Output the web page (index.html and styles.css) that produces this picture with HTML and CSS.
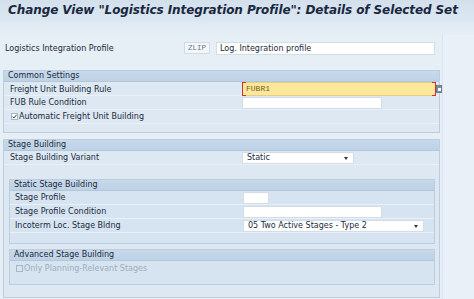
FILE: index.html
```html
<!DOCTYPE html>
<html>
<head>
<meta charset="utf-8">
<link rel="stylesheet" href="styles.css">
</head>
<body>
<div class="title">Change View "Logistics Integration Profile": Details of Selected Set</div>
<div class="toolbar"></div>
<div class="content">
  <div class="toprow">
    <span class="label">Logistics Integration Profile</span>
    <span class="key">ZLIP</span>
    <span class="field desc">Log. Integration profile</span>
  </div>

  <div class="group g1">
    <div class="ghead">Common Settings</div>
    <div class="row">
      <span class="label">Freight Unit Building Rule</span>
      <span class="fubr"><span class="field req">FUBR1</span><span class="help"></span></span>
    </div>
    <div class="row">
      <span class="label">FUB Rule Condition</span>
      <span class="field w140"></span>
    </div>
    <div class="row">
      <span class="chk"><svg width="7" height="7" viewBox="0 0 7 7"><rect x="0.5" y="0.5" width="6" height="6" fill="#fff" stroke="#a6b4c4"/><path d="M1.5 3.6 L2.9 5 L5.6 1.8" fill="none" stroke="#2a3a4e" stroke-width="1"/></svg>Automatic Freight Unit Building</span>
    </div>
  </div>

  <div class="group g2">
    <div class="ghead">Stage Building</div>
    <div class="row">
      <span class="label">Stage Building Variant</span>
      <span class="field dd w112">Static<i class="arr"></i></span>
    </div>
    <div class="sub s1">
      <div class="ghead">Static Stage Building</div>
      <div class="row">
        <span class="label">Stage Profile</span>
        <span class="field w26"></span>
      </div>
      <div class="row">
        <span class="label">Stage Profile Condition</span>
        <span class="field w139"></span>
      </div>
      <div class="row">
        <span class="label">Incoterm Loc. Stage Bldng</span>
        <span class="field dd w181">05 Two Active Stages - Type 2<i class="arr"></i></span>
      </div>
    </div>
    <div class="sub s2">
      <div class="ghead">Advanced Stage Building</div>
      <div class="row dis">
        <span class="chk"><svg width="7" height="7" viewBox="0 0 7 7"><rect x="0.5" y="0.5" width="6" height="6" fill="none" stroke="#a9b6c6"/></svg>Only Planning-Relevant Stages</span>
      </div>
    </div>
  </div>
</div>
</body>
</html>
```

FILE: styles.css
```css
* { box-sizing: border-box; }
html, body { margin: 0; padding: 0; }
body {
  width: 474px;
  height: 299px;
  overflow: hidden;
  background: #e9f0f7;
  font-family: "DejaVu Sans", Verdana, sans-serif;
  font-size: 8px;
  color: #1c2a3b;
}
.title {
  height: 22px;
  padding: 3px 0 0 8px;
  font-size: 12px;
  font-weight: bold;
  font-style: italic;
  color: #18283f;
  background: linear-gradient(#d3e0ec, #dde7f1);
  white-space: nowrap;
  letter-spacing: -0.09px;
}
.toolbar {
  height: 13px;
  background: linear-gradient(#dfe8f1, #e6eef6);
}
.content {
  padding: 6px 0 0 3px;
  width: 443px;
  background: #e6eef6;
  height: 264px;
  border-right: 1px solid #dae4ee;
}
.toprow {
  height: 14px;
  display: flex;
  align-items: center;
  padding-left: 2px;
}
.toprow .label { width: 179px; }
.key {
  width: 26px;
  height: 12px;
  border: 1px solid #d2dbe5;
  background: #f4f7fa;
  color: #6a7785;
  font-family: "Liberation Mono", monospace;
  font-size: 7.5px;
  line-height: 10px;
  text-align: center;
  margin-right: 6px;
}
.field {
  display: inline-block;
  height: 12px;
  background: #fff;
  border: 1px solid #d3dde8;
  line-height: 10px;
  padding-left: 3px;
  position: relative;
  white-space: nowrap;
}
.desc { width: 219px; height: 13px; line-height: 11px; }
.group {
  width: 437px;
  border: 1px solid #bccddf;
  background: #dde8f3;
}
.g1 { margin-top: 15px; padding-bottom: 8px; }
.g2 { margin-top: 6px; padding-bottom: 12px; height: 159px; }
.ghead {
  height: 11px;
  line-height: 10px;
  padding-left: 4px;
  background: linear-gradient(#c7d9eb, #bed2e6);
  border-bottom: 1px solid #b3c7dc;
  color: #1c2a3b;
}
.row {
  height: 14px;
  display: grid;
  grid-template-columns: 232px auto;
  align-items: center;
  padding-left: 6px;
  border-bottom: 1px solid #e9f0f7;
}
.g1 .row:first-of-type { height: 15px; }
.fubr { display: flex; align-items: center; }
.req {
  width: 194px;
  height: 14px;
  line-height: 12px;
  background: #fde79b;
  border-color: #e5cf84;
  color: #6f5d20;
  font-family: "Liberation Mono", monospace;
  font-size: 8px;
}
.req::before, .req::after {
  content: "";
  position: absolute;
  top: -1px;
  bottom: -1px;
  width: 3px;
  border: 1px solid #d0342c;
}
.req::before { left: -1px; border-right: none; }
.req::after { right: -1px; border-left: none; }
.help {
  width: 6px;
  height: 8px;
  margin-left: 0;
  background: #7d8ea3;
  border: 1px solid #6c7d92;
  position: relative;
}
.help::after {
  content: "";
  position: absolute;
  left: 1px; top: 2px;
  width: 3px; height: 3px;
  background: #fff;
}
.w140 { width: 140px; }
.w112 { width: 112px; }
.w26 { width: 26px; }
.w139 { width: 139px; }
.w181 { width: 181px; }
.dd { padding-left: 4px; }
.arr {
  position: absolute;
  right: 5px;
  top: 4px;
  width: 0; height: 0;
  border-left: 2.5px solid transparent;
  border-right: 2.5px solid transparent;
  border-top: 3px solid #2b3645;
}
.chk {
  display: flex;
  align-items: center;
  gap: 1px;
  margin-left: 1px;
  grid-column: 1 / span 2;
}
.g2 > .row { margin-bottom: 14px; border-bottom: 1px solid #e9f0f7; }
.sub {
  width: 426px;
  margin-left: 5px;
  border: 1px solid #bccddf;
  background: #d6e4f1;
}
.s1 { padding-bottom: 10px; }
.s2 { margin-top: 5px; height: 36px; }
.sub .row { grid-template-columns: 228px auto; padding-left: 5px; }
.sub .ghead { padding-left: 4px; }
.dis { color: #9fadbc; border-bottom: none; }
```
